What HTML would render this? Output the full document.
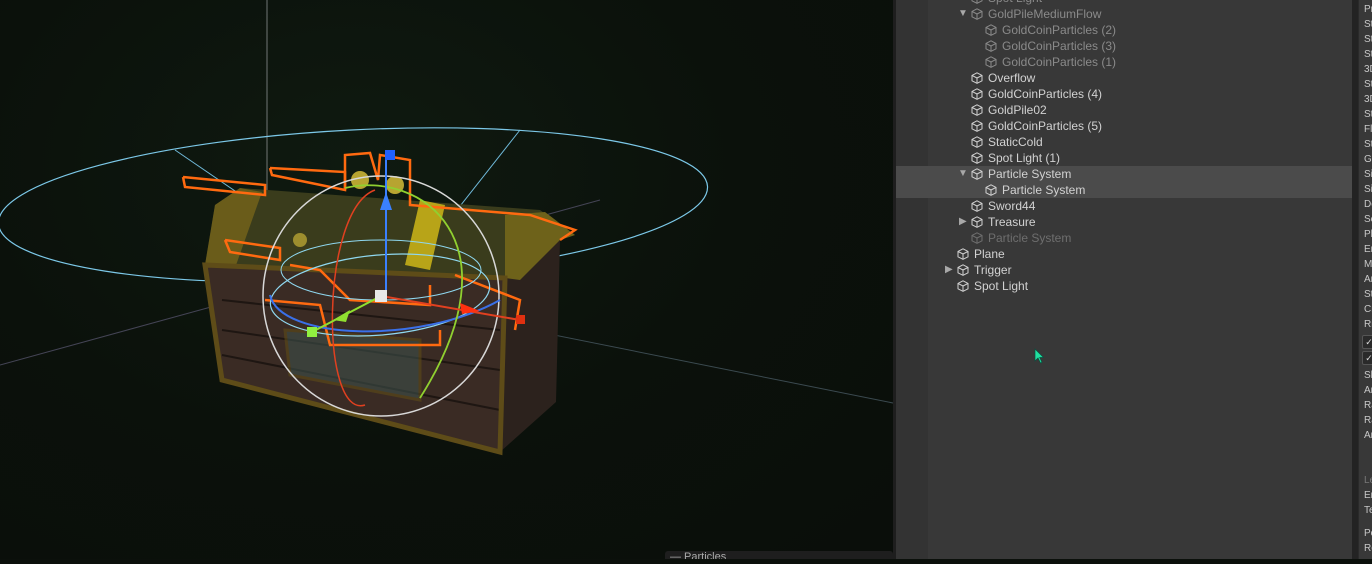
<!DOCTYPE html>
<html><head><style>
html,body{margin:0;padding:0;width:1372px;height:559px;overflow:hidden;background:#0b100b;font-family:"Liberation Sans",sans-serif}
#scene{position:absolute;left:0;top:0;width:893px;height:559px;background:radial-gradient(ellipse at 40% 30%,#0f1a10 0%,#0b110b 50%,#0a0e0a 100%)}
#sep{position:absolute;left:893px;top:0;width:3px;height:559px;background:#1e1e1e}
#hier{position:absolute;left:896px;top:0;width:456px;height:559px;background:#383838}
#gut{position:absolute;left:896px;top:0;width:32px;height:559px;background:#333333}
#rsep{position:absolute;left:1352px;top:0;width:6px;height:559px;background:#232323}
#insp{position:absolute;left:1358px;top:0;width:14px;height:559px;background:#383838;border-left:1px solid #2a2a2a;overflow:hidden}
#rows{position:absolute;left:0;top:1px}
.row{position:absolute;height:16px;line-height:16px;font-size:12px;color:#d2d2d2;white-space:nowrap}
.row.dim{color:#8a8a8a}
.row svg{position:absolute;top:2px;left:0}
.row span{position:absolute;left:17px;top:0}
.arr{position:absolute;font-size:10px;color:#a8a8a8;line-height:16px}
.sel{position:absolute;left:896px;top:166px;width:456px;height:32px;background:#4b4b4b}
.ir{position:absolute;left:5px;font-size:10px;color:#c8c8c8;line-height:15px}
.cb{position:absolute;left:3px;width:12px;height:12px;background:#2a2a2a;border:1px solid #555;border-radius:2px;color:#ddd;font-size:9px;line-height:12px;text-align:center}
</style></head><body>
<div id="scene">
<svg width="893" height="559" viewBox="0 0 893 559">
<line x1="267" y1="0" x2="267" y2="380" stroke="#8a8f90" stroke-width="1" opacity=".8"/>
<line x1="0" y1="365" x2="600" y2="200" stroke="#445" stroke-width="1"/>
<line x1="380" y1="300" x2="893" y2="403" stroke="#3b4a50" stroke-width="1"/>
<line x1="175" y1="150" x2="380" y2="290" stroke="#6fb8d8" stroke-width="1"/>
<line x1="520" y1="130" x2="390" y2="295" stroke="#6fb8d8" stroke-width="1"/>
<ellipse cx="353" cy="205" rx="355" ry="75" transform="rotate(-3 353 205)" fill="none" stroke="#7cc8e8" stroke-width="1.2"/>
<polygon points="205,265 505,278 500,452 222,380" fill="#3a2b24"/>
<polygon points="505,278 560,240 556,402 500,452" fill="#2c221d"/>
<polygon points="205,265 215,205 240,188 540,210 575,235 560,240 505,278" fill="#3a3c1c"/>
<polygon points="215,205 240,188 262,192 235,268 205,265" fill="#6a5c1a"/>
<polygon points="505,215 545,212 575,235 560,240 520,280 505,278" fill="#6e621a"/>
<line x1="222" y1="300" x2="500" y2="330" stroke="#1e1612" stroke-width="2"/>
<line x1="222" y1="330" x2="500" y2="370" stroke="#1e1612" stroke-width="2"/>
<line x1="222" y1="355" x2="500" y2="410" stroke="#1e1612" stroke-width="2"/>
<polygon points="205,265 505,278 500,452 222,380" fill="none" stroke="#5e4c18" stroke-width="5"/>
<polygon points="285,330 420,340 420,400 290,375" fill="#3d4f4a" opacity=".6" stroke="#5e4c18" stroke-width="3"/>
<polygon points="420,200 445,205 430,270 405,265" fill="#b8a418"/>
<circle cx="360" cy="180" r="9" fill="#ffe040" opacity=".7"/>
<circle cx="395" cy="185" r="9" fill="#ffe040" opacity=".7"/>
<circle cx="300" cy="240" r="7" fill="#ffe040" opacity=".5"/>
<g fill="none" stroke="#ff6a10" stroke-width="2.5">
<polyline points="345,190 345,155 370,153 378,180 380,155 410,160 410,205 530,215 575,230 560,240"/>
<polyline points="183,177 265,185 265,195 185,187 183,177"/>
<polyline points="270,168 345,172 345,190 272,175 270,168"/>
<polyline points="225,240 280,248 280,260 230,252 225,240"/>
<polyline points="265,300 320,305 330,345 440,345 440,330"/>
<polyline points="290,265 320,270 350,300 430,305 430,285"/>
<polyline points="455,275 520,300 515,330"/>
</g>
<ellipse cx="381" cy="296" rx="118" ry="120" fill="none" stroke="#d8d8d8" stroke-width="1.5"/>
<ellipse cx="381" cy="270" rx="100" ry="30" fill="none" stroke="#8fd8f0" stroke-width="1"/>
<ellipse cx="380" cy="295" rx="110" ry="40" transform="rotate(-5 380 295)" fill="none" stroke="#8fd8f0" stroke-width="1.2"/>
<path d="M270,295 C280,340 420,345 500,300" fill="none" stroke="#3a70e8" stroke-width="2"/>
<path d="M375,190 C320,210 320,420 365,405" fill="none" stroke="#e04020" stroke-width="1.5"/>
<path d="M345,188 C420,170 520,240 420,398" fill="none" stroke="#90d030" stroke-width="1.8"/>
<line x1="386" y1="295" x2="386" y2="158" stroke="#3a80ff" stroke-width="2"/>
<polygon points="380,210 386,192 392,210" fill="#3a80ff"/>
<rect x="385" y="150" width="10" height="10" fill="#2060ff"/>
<line x1="381" y1="296" x2="520" y2="320" stroke="#e04020" stroke-width="2"/>
<polygon points="460,303 480,311 462,314" fill="#ff3010"/>
<rect x="516" y="315" width="9" height="9" fill="#e03010"/>
<line x1="381" y1="296" x2="312" y2="332" stroke="#90e030" stroke-width="2"/>
<polygon points="333,320 350,310 346,322" fill="#90e030"/>
<rect x="307" y="327" width="10" height="10" fill="#90f040"/>
<rect x="375" y="290" width="12" height="12" fill="#e8e8e8"/>
</svg>
<div style="position:absolute;left:665px;top:551px;width:228px;height:8px;background:#1e1e1e;border-radius:3px 3px 0 0"></div>
<div style="position:absolute;left:670px;top:552px;font-size:11px;color:#aaa;line-height:10px;height:7px;overflow:hidden">&mdash; Particles</div>
</div>
<div id="sep"></div>
<div id="hier"></div>
<div id="gut"></div>
<div class="sel"></div>
<div id="rsep"></div>
<div id="insp">
<div class="ir" style="top:2px">Pr</div><div class="ir" style="top:17px">St</div><div class="ir" style="top:32px">St</div><div class="ir" style="top:47px">St</div><div class="ir" style="top:62px">3D</div><div class="ir" style="top:77px">St</div><div class="ir" style="top:92px">3D</div><div class="ir" style="top:107px">St</div><div class="ir" style="top:122px">Fl</div><div class="ir" style="top:137px">St</div><div class="ir" style="top:152px">Gr</div><div class="ir" style="top:167px">Si</div><div class="ir" style="top:182px">Si</div><div class="ir" style="top:197px">De</div><div class="ir" style="top:212px">Sc</div><div class="ir" style="top:227px">Pl</div><div class="ir" style="top:242px">Er</div><div class="ir" style="top:257px">M</div><div class="ir" style="top:272px">Ar</div><div class="ir" style="top:287px">St</div><div class="ir" style="top:302px">Cr</div><div class="ir" style="top:317px">Ri</div>
<div class="cb" style="top:335px">✓</div><div class="cb" style="top:351px">✓</div>
<div class="ir" style="top:368px">Sh</div><div class="ir" style="top:383px">Ar</div><div class="ir" style="top:398px">Ra</div><div class="ir" style="top:413px">Ra</div><div class="ir" style="top:428px">Ar</div>
<div class="ir" style="top:473px;color:#777">Le</div><div class="ir" style="top:488px">Er</div><div class="ir" style="top:503px">Te</div><div class="ir" style="top:526px">Po</div><div class="ir" style="top:541px">Ro</div>
</div>

<svg width="0" height="0" style="position:absolute"><defs><symbol id="cube" viewBox="0 0 12 12"><path d="M6 .8 11 3.4V8.8L6 11.3 1 8.8V3.4Z M1 3.4 6 6 11 3.4 M6 6V11.3" fill="none" stroke="currentColor" stroke-width="1"/></symbol></defs></svg>

<div id="rows">
<div class="row dim" style="left:971px;top:-11px"><svg width="12" height="12"><use href="#cube"/></svg><span>Spot Light</span></div>
<div class="arr" style="left:958px;top:5px">▼</div>
<div class="row dim" style="left:971px;top:5px"><svg width="12" height="12"><use href="#cube"/></svg><span>GoldPileMediumFlow</span></div>
<div class="row dim" style="left:985px;top:21px"><svg width="12" height="12"><use href="#cube"/></svg><span>GoldCoinParticles (2)</span></div>
<div class="row dim" style="left:985px;top:37px"><svg width="12" height="12"><use href="#cube"/></svg><span>GoldCoinParticles (3)</span></div>
<div class="row dim" style="left:985px;top:53px"><svg width="12" height="12"><use href="#cube"/></svg><span>GoldCoinParticles (1)</span></div>
<div class="row" style="left:971px;top:69px"><svg width="12" height="12"><use href="#cube"/></svg><span>Overflow</span></div>
<div class="row" style="left:971px;top:85px"><svg width="12" height="12"><use href="#cube"/></svg><span>GoldCoinParticles (4)</span></div>
<div class="row" style="left:971px;top:101px"><svg width="12" height="12"><use href="#cube"/></svg><span>GoldPile02</span></div>
<div class="row" style="left:971px;top:117px"><svg width="12" height="12"><use href="#cube"/></svg><span>GoldCoinParticles (5)</span></div>
<div class="row" style="left:971px;top:133px"><svg width="12" height="12"><use href="#cube"/></svg><span>StaticCold</span></div>
<div class="row" style="left:971px;top:149px"><svg width="12" height="12"><use href="#cube"/></svg><span>Spot Light (1)</span></div>
<div class="arr" style="left:958px;top:165px">▼</div>
<div class="row" style="left:971px;top:165px"><svg width="12" height="12"><use href="#cube"/></svg><span>Particle System</span></div>
<div class="row" style="left:985px;top:181px"><svg width="12" height="12"><use href="#cube"/></svg><span>Particle System</span></div>
<div class="row" style="left:971px;top:197px"><svg width="12" height="12"><use href="#cube"/></svg><span>Sword44</span></div>
<div class="arr" style="left:959px;top:213px">▶</div>
<div class="row" style="left:971px;top:213px"><svg width="12" height="12"><use href="#cube"/></svg><span>Treasure</span></div>
<div class="row dim" style="left:971px;top:229px;color:#6e6e6e"><svg width="12" height="12"><use href="#cube"/></svg><span>Particle System</span></div>
<div class="row" style="left:957px;top:245px"><svg width="12" height="12"><use href="#cube"/></svg><span>Plane</span></div>
<div class="arr" style="left:945px;top:261px">▶</div>
<div class="row" style="left:957px;top:261px"><svg width="12" height="12"><use href="#cube"/></svg><span>Trigger</span></div>
<div class="row" style="left:957px;top:277px"><svg width="12" height="12"><use href="#cube"/></svg><span>Spot Light</span></div>
</div>
<svg style="position:absolute;left:1034px;top:348px" width="10" height="16"><path d="M1 1V13L4 10 6.5 15 8 14.3 5.7 9.5H9.5Z" fill="#20e0a0" stroke="#0a5040" stroke-width=".7"/></svg>
</body></html>
